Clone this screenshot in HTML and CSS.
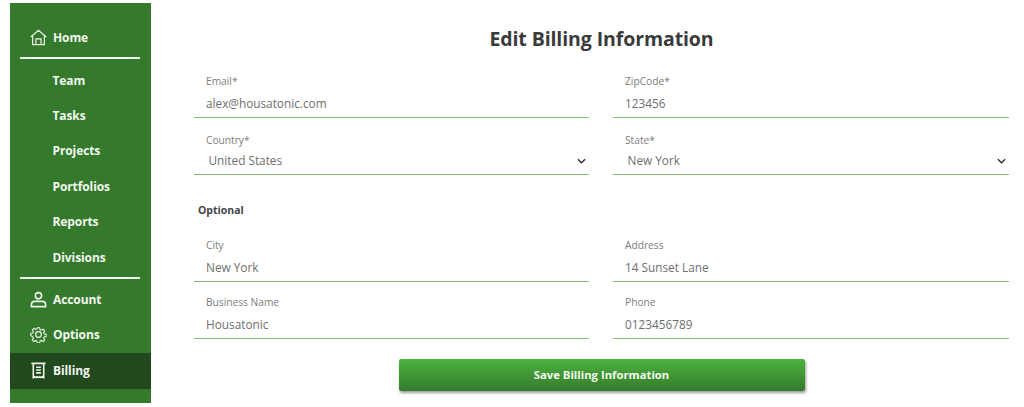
FILE: index.html
```html
<!DOCTYPE html>
<html lang="en">
<head>
<meta charset="utf-8">
<title>Edit Billing Information</title>
<link rel="stylesheet" href="styles.css">
</head>
<body>
<div class="page">
  <nav class="sidebar">
    <a class="nav-item home">
      <svg class="icon" viewBox="0 0 18 18"><path d="M.8 8.500 9 1.300l8.200 7.200M2.800 7v9.500h12.400V7M6.300 16.500v-6h5.400v6"/></svg>
      <span>Home</span>
    </a>
    <div class="rule"></div>
    <div class="sub">
      <a class="nav-item">Team</a>
      <a class="nav-item">Tasks</a>
      <a class="nav-item">Projects</a>
      <a class="nav-item">Portfolios</a>
      <a class="nav-item">Reports</a>
      <a class="nav-item">Divisions</a>
    </div>
    <div class="rule lower"></div>
    <a class="nav-item account">
      <svg class="icon bold" viewBox="0 0 18 18"><circle cx="9" cy="5" r="3.300"/><path d="M1.500 16.500v-2.200c0-2 1.500-3.300 3.500-3.300h8c2 0 3.500 1.300 3.500 3.300v2.200z"/></svg>
      <span>Account</span>
    </a>
    <a class="nav-item">
      <svg class="icon" viewBox="0 0 18 18"><circle cx="9" cy="9" r="3"/><path d="M7.600 1h2.800l.4 2.300 1.500.7 2-1.300 2 2-1.300 2 .7 1.500 2.300.4v2.800l-2.300.4-.7 1.500 1.300 2-2 2-2-1.300-1.500.7-.4 2.300H7.600l-.4-2.300-1.500-.7-2 1.300-2-2 1.300-2-.7-1.500L0 10.400V7.600l2.300-.4.7-1.500-1.300-2 2-2 2 1.300 1.500-.7z" transform="translate(.9 .9) scale(.9)"/></svg>
      <span>Options</span>
    </a>
    <a class="nav-item active">
      <svg class="icon bold" viewBox="0 0 18 18"><path d="M1.500 1.500h15M3.500 1.500v15l1.400-1 1.400 1 1.300-1 1.400 1 1.300-1 1.400 1 1.300-1 1.500 1v-15M6.500 5.500h5M6.500 8.500h5M6.500 11.500h5"/></svg>
      <span>Billing</span>
    </a>
  </nav>
  <main class="content">
    <h1>Edit Billing Information</h1>
    <div class="grid">
      <div class="field"><label>Email*</label><div class="value">alex@housatonic.com</div></div>
      <div class="field"><label>ZipCode*</label><div class="value">123456</div></div>
      <div class="field select"><label>Country*</label><div class="value">United States<svg class="chev" viewBox="0 0 10 6"><path d="M1 1l4 4 4-4"/></svg></div></div>
      <div class="field select"><label>State*</label><div class="value">New York<svg class="chev" viewBox="0 0 10 6"><path d="M1 1l4 4 4-4"/></svg></div></div>
    </div>
    <h2>Optional</h2>
    <div class="grid optional">
      <div class="field"><label>City</label><div class="value">New York</div></div>
      <div class="field"><label>Address</label><div class="value">14 Sunset Lane</div></div>
      <div class="field"><label>Business Name</label><div class="value">Housatonic</div></div>
      <div class="field"><label>Phone</label><div class="value">0123456789</div></div>
    </div>
    <button class="save" type="button">Save Billing Information</button>
  </main>
</div>
</body>
</html>
```
FILE: styles.css
```css
* { box-sizing: border-box; }
html, body { margin: 0; padding: 0; background: #fff; }
body { font-family: "Open Sans", "Noto Sans", sans-serif; height: 407px; overflow: hidden; }
.page { display: flex; padding: 3px 15px 0 10px; gap: 43px; }

.sidebar {
  width: 141px; height: 400px; flex: none;
  background: #35792c;
  padding-top: 17px;
  display: flex; flex-direction: column;
}
.nav-item {
  height: 35.4px; flex: none;
  display: flex; align-items: center; gap: 6px;
  padding-left: 20px;
  color: #f1f8ee;
  font-size: 12px; font-weight: 700;
  letter-spacing: -.1px;
}
.nav-item .icon { width: 17px; height: 17px; fill: none; stroke: #eef6ea; stroke-width: 1.25; flex: none; }
.nav-item .icon.bold { stroke-width: 1.7; }
.home { height: 35px; }
.rule { height: 2px; background: #f2f7ef; margin: 2px 11px 0 10px; flex: none; }
.rule.lower { margin-top: 2px; }
.sub { padding-top: 3.500px; }
.sub .nav-item { padding-left: 42.500px; }
.account { margin-top: 3px; }
.active { background: #21491d; height: 36px; }

.content { flex: 1; min-width: 0; display: flex; flex-direction: column; }
h1 {
  margin: 22px 0 0; text-align: center;
  font-size: 19.500px; line-height: 28px; font-weight: 700; color: #3a3a3a;
  letter-spacing: -.1px;
}
h2 {
  margin: 27px 0 17px 4px;
  font-size: 10.500px; line-height: 16px; font-weight: 700; color: #444;
}
.grid { display: grid; grid-template-columns: 395px 396px; column-gap: 24px; row-gap: 9.500px; }
.grid.optional { row-gap: 10px; }
h1 + .grid { margin-top: 18px; }
.field { height: 47px; border-bottom: 1px solid #82bb76; padding-left: 12px; display: flex; flex-direction: column; }
.field label { font-size: 10.200px; line-height: 14px; color: #7d7d7d; margin-top: 3px; }
.value { font-size: 11.800px; line-height: 18px; color: #6e6e6e; margin-top: 6px; position: relative; }
.select label { margin-top: 5px; }
.select .value { padding-left: 2.500px; margin-top: 4.500px; }
.chev { position: absolute; right: 3px; top: 7px; width: 9px; height: 6px; fill: none; stroke: #333; stroke-width: 1.6; }

.save {
  align-self: center; width: 406px; height: 32px; margin-top: 20px;
  border: 0; border-radius: 2px;
  background: linear-gradient(#4db33f, #357a2c);
  color: #f2f9ef; font: 700 11.300px "Open Sans", "Noto Sans", sans-serif;
  box-shadow: 1px 2px 3px rgba(0,0,0,.4);
}
```
